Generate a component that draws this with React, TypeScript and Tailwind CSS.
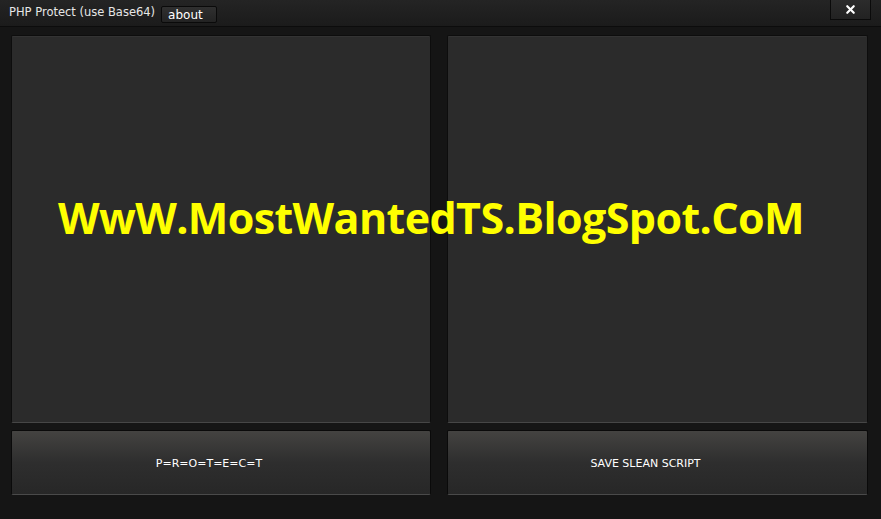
import { X } from "lucide-react";

const TITLE = "PHP Protect (use Base64)";
const WATERMARK = "WwW.MostWantedTS.BlogSpot.CoM";

const buttons = ["P=R=O=T=E=C=T", "SAVE SLEAN SCRIPT"];

export default function App() {
  return (
    <div className="relative h-[519px] w-[881px] overflow-hidden bg-[#151515] font-['DejaVu_Sans',sans-serif] text-[11px] text-[#e6e6e6]">
      {/* title bar */}
      <div className="flex h-[27px] items-start border-b border-[#0c0c0c] bg-gradient-to-b from-[#242424] to-[#1b1b1b] pl-[9px]">
        <span className="mt-[7px] text-[11.5px] leading-none">{TITLE}</span>
        <button className="ml-[6px] mt-[6px] h-[17px] w-[56px] rounded-[2px] border border-[#0a0a0a] bg-gradient-to-b from-[#303030] to-[#232323] pl-[6px] text-left text-[12px] leading-none text-white">
          about
        </button>
        <button className="ml-auto mr-[10px] flex h-[20px] w-[41px] items-center justify-center border border-t-0 border-[#0a0a0a] bg-gradient-to-b from-[#2c2c2c] to-[#222]">
          <X className="h-[13px] w-[13px] text-white" strokeWidth={4} />
        </button>
      </div>

      {/* body */}
      <div className="grid grid-cols-[420px_421px] gap-x-[16px] gap-y-[7px] pl-[11px] pt-[8px]">
        <div className="h-[388px] rounded-[2px] border border-[#0d0d0d] border-b-[#464646] bg-[#2b2b2b] shadow-[inset_0_1px_0_#333]" />
        <div className="h-[388px] rounded-[2px] border border-[#0d0d0d] border-b-[#464646] bg-[#2b2b2b] shadow-[inset_0_1px_0_#333]" />
        {buttons.map((label) => (
          <button
            key={label}
            className="flex h-[65px] items-center justify-center rounded-[2px] border border-[#0a0a0a] border-b-[#4a4a4a] bg-gradient-to-b from-[#444341] via-[#2e2e2e] to-[#272727] pr-[24px] pt-[3px] text-[11px] text-white"
          >
            {label}
          </button>
        ))}
      </div>

      {/* watermark over the panels */}
      <div className="pointer-events-none absolute left-[58px] top-[196px] font-['Open_Sans',sans-serif] text-[43px] font-bold leading-none tracking-[-0.6px] text-[#ffff00]">
        {WATERMARK}
      </div>
    </div>
  );
}
